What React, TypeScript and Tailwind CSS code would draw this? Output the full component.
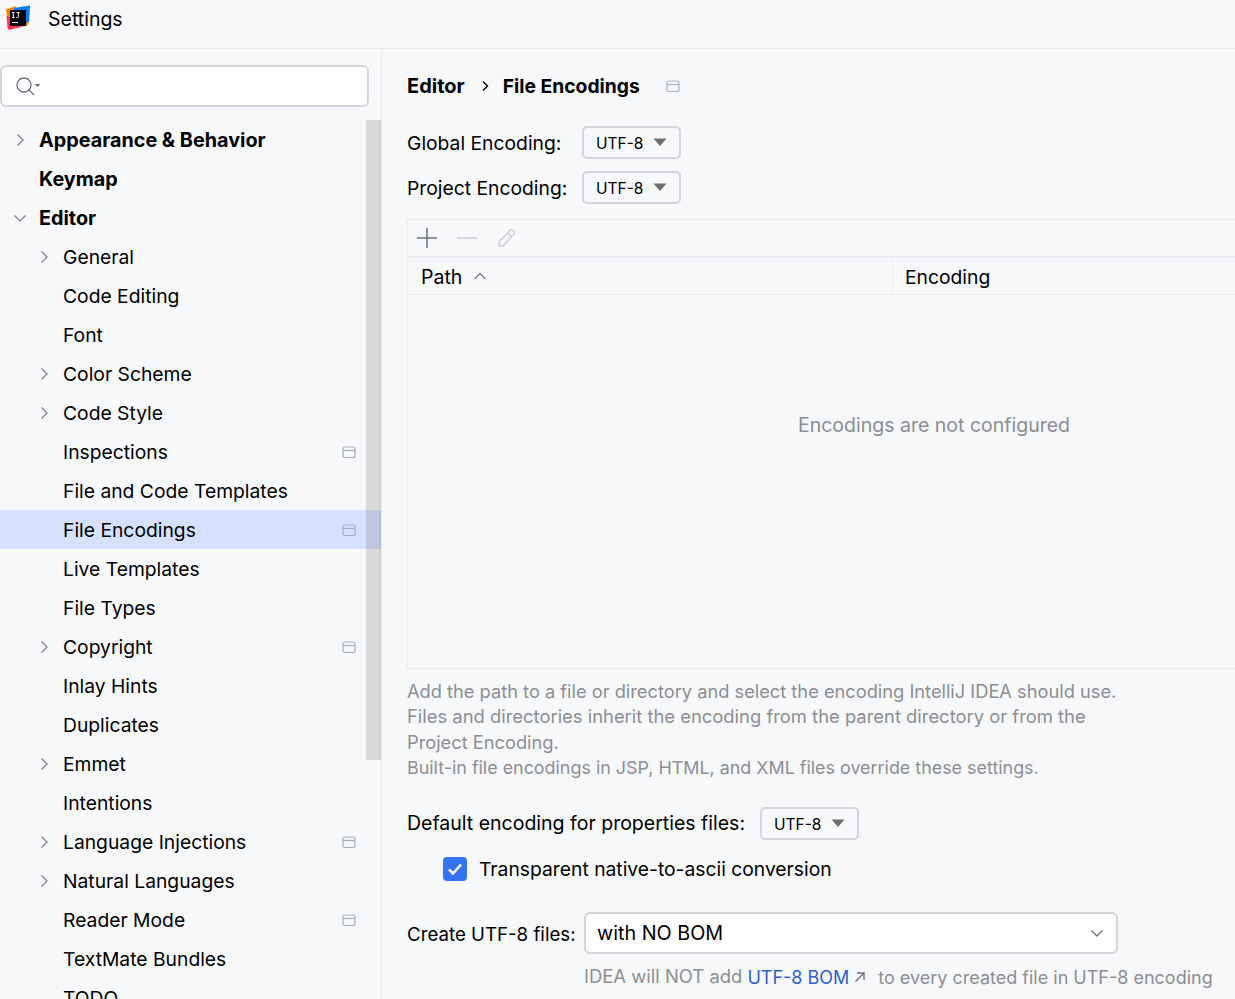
const rows: { label: string; depth: number; bold?: boolean; arrow?: 'right' | 'down'; badge?: boolean; selected?: boolean }[] = [
  { label: 'Appearance & Behavior', depth: 0, bold: true, arrow: 'right' },
  { label: 'Keymap', depth: 0, bold: true },
  { label: 'Editor', depth: 0, bold: true, arrow: 'down' },
  { label: 'General', depth: 1, arrow: 'right' },
  { label: 'Code Editing', depth: 1 },
  { label: 'Font', depth: 1 },
  { label: 'Color Scheme', depth: 1, arrow: 'right' },
  { label: 'Code Style', depth: 1, arrow: 'right' },
  { label: 'Inspections', depth: 1, badge: true },
  { label: 'File and Code Templates', depth: 1 },
  { label: 'File Encodings', depth: 1, badge: true, selected: true },
  { label: 'Live Templates', depth: 1 },
  { label: 'File Types', depth: 1 },
  { label: 'Copyright', depth: 1, arrow: 'right', badge: true },
  { label: 'Inlay Hints', depth: 1 },
  { label: 'Duplicates', depth: 1 },
  { label: 'Emmet', depth: 1, arrow: 'right' },
  { label: 'Intentions', depth: 1 },
  { label: 'Language Injections', depth: 1, arrow: 'right', badge: true },
  { label: 'Natural Languages', depth: 1, arrow: 'right' },
  { label: 'Reader Mode', depth: 1, badge: true },
  { label: 'TextMate Bundles', depth: 1 },
  { label: 'TODO', depth: 1 },
];

function ProjectBadge() {
  return (
    <svg width="14" height="14" viewBox="0 0 14 14" fill="none" stroke="#a8adbd" strokeWidth="1.2">
      <rect x="1" y="2" width="12" height="10.5" rx="2" />
      <path d="M1 5.5h12" />
    </svg>
  );
}

function Logo() {
  return (
    <svg width="32" height="32" viewBox="0 0 32 32" className="shrink-0">
      <path d="M6 9 15 6.500 24 14 29 22 27 26 14 24 7 17Z" fill="#ff8100" />
      <path d="M14 8 30 5.500 29 22 24 23 14 16Z" fill="#087cfa" />
      <path d="M6.500 16 18 22 23 26.500 9 30 7.500 28Z" fill="#fe315d" />
      <rect x="10" y="10" width="16" height="16" fill="#000" />
      <path d="M12 12.500h2.600M13.300 12.500v5M12 17.500h2.600M16.500 12.500h3M18.300 12.500v4.200q0 .9-1 .9h-1" stroke="#fff" strokeWidth="1" fill="none" />
      <rect x="12" y="22" width="6" height="1" fill="#fff" />
    </svg>
  );
}

function Chevron({ dir }: { dir: 'right' | 'down' }) {
  return (
    <svg width="14" height="14" viewBox="0 0 14 14" fill="none" stroke="#7c7f88" strokeWidth="1.2">
      {dir === 'right' ? <path d="M4.500 1.500 10 7l-5.500 5.500" /> : <path d="M1.500 4.500 7 10l5.500-5.500" />}
    </svg>
  );
}

function TreeRow({ row }: { row: (typeof rows)[number] }) {
  const indent = row.depth === 0 ? 'pl-[39px]' : 'pl-[63px]';
  const arrowLeft = row.depth === 0 ? 'left-[13px]' : 'left-[37px]';
  return (
    <div className={`relative flex h-[39px] shrink-0 items-center pr-[25px] ${indent} ${row.selected ? 'bg-[#d5e1ff]' : ''}`}>
      {row.arrow && (
        <span className={`absolute top-[13px] ${arrowLeft}`}>
          <Chevron dir={row.arrow} />
        </span>
      )}
      <span className={`flex-1 pt-[2px] ${row.bold ? 'text-[19.800px] font-bold' : 'text-[19.300px]'}`}>{row.label}</span>
      {row.badge && <ProjectBadge />}
    </div>
  );
}

function SmallCombo() {
  return (
    <div className="flex h-[33px] w-[99px] shrink-0 items-center rounded-[5px] border-2 border-[#d3d5db] pl-[12px] text-[15.500px]">
      <span className="w-[57px] pt-[2px]">UTF-8</span>
      <svg width="14" height="9" viewBox="0 0 14 9" fill="#6e6e6e" className="mb-[1px]">
        <path d="M0.500 0.500h13L7 8z" />
      </svg>
    </div>
  );
}

export default function App() {
  return (
    <div className="flex h-[999px] w-[1235px] flex-col overflow-hidden bg-[#f7f8fa] font-['Inter',sans-serif] text-[19.500px] text-black">
      <div className="flex h-[49px] shrink-0 items-start border-b border-[#ebecf0]">
        <Logo />
        <span className="mt-[5px] ml-[16px]">Settings</span>
      </div>

      <div className="flex min-h-0 flex-1">
        <aside className="relative flex w-[382px] shrink-0 flex-col overflow-hidden border-r border-[#ebecf0]">
          <div className="mt-[16px] flex h-[42px] w-[369px] shrink-0 items-center rounded-[6px] border-2 border-[#d3d5db] bg-white pl-[13px]">
            <svg width="26" height="22" viewBox="0 0 26 22" fill="none" stroke="#6c707e" strokeWidth="1.300">
              <circle cx="9" cy="10" r="7" />
              <path d="m14 15 5 5" />
              <path d="M19.500 9h6l-3 3z" fill="#6c707e" stroke="none" />
            </svg>
          </div>
          <div className="mt-[13px] flex flex-col">
            {rows.map((row) => (
              <TreeRow key={row.label} row={row} />
            ))}
          </div>
          {/* scrollbar sits on top of the rows */}
          <div className="absolute top-[71px] left-[366px] h-[640px] w-[15px] border-r-2 border-[#7f7f80]/10 bg-[#7f7f80]/25" />
        </aside>

        <main className="flex min-w-0 flex-1 flex-col pt-[24px] pl-[25px]">
          <div className="flex h-[26px] shrink-0 items-center font-bold">
            <span className="text-[20px]">Editor</span>
            <svg width="10" height="12" viewBox="0 0 10 12" fill="none" stroke="#000" strokeWidth="1.400" className="mr-[13px] ml-[15px]">
              <path d="M3 1.500 7.500 6 3 10.500" />
            </svg>
            <span className="text-[19.300px]">File Encodings</span>
            <span className="ml-[26px]">
              <ProjectBadge />
            </span>
          </div>

          <div className="mt-[27px] flex h-[33px] shrink-0 items-center">
            <span className="w-[175px] shrink-0 pt-[2px] text-[19.300px]">Global Encoding:</span>
            <SmallCombo />
          </div>
          <div className="mt-[12px] flex h-[33px] shrink-0 items-center">
            <span className="w-[175px] shrink-0 pt-[2px] text-[19.300px]">Project Encoding:</span>
            <SmallCombo />
          </div>

          <div className="mt-[15px] flex h-[450px] w-[900px] shrink-0 flex-col border-y border-l border-[#ebecf0]">
            <div className="flex h-[38px] shrink-0 items-center gap-[20px] border-b-2 border-[#ebecf0] pl-[9px]">
              <svg width="20" height="20" viewBox="0 0 20 20" stroke="#6c707e" strokeWidth="1.500">
                <path d="M10 0v20M0 10h20" />
              </svg>
              <svg width="20" height="20" viewBox="0 0 20 20" stroke="#c9ccd6" strokeWidth="1.500">
                <path d="M0 10h20" />
              </svg>
              <svg width="20" height="20" viewBox="0 0 20 20" fill="none" stroke="#c9ccd6" strokeWidth="1.400">
                <path d="M2 14 13 2.500a2 2 0 0 1 2.800 0l1 1a2 2 0 0 1 0 2.800L6 18H2zM11 5l4 4" />
              </svg>
            </div>
            <div className="flex h-[37px] shrink-0 border-b border-[#ebecf0]">
              <div className="flex w-[485px] items-center border-r border-[#ebecf0] pl-[13px]">
                <span className="pt-[4px]">Path</span>
                <svg width="14" height="10" viewBox="0 0 14 10" fill="none" stroke="#7c7f88" strokeWidth="1.300" className="ml-[11px]">
                  <path d="M1.500 8 7 2.500 12.500 8" />
                </svg>
              </div>
              <div className="flex items-center pt-[3px] pl-[12px] text-[19.300px]">Encoding</div>
            </div>
            <div className="flex w-[835px] flex-1 items-center justify-center pb-[111px] pl-[217px] text-[#8c8e94]">
              Encodings are not configured
            </div>
          </div>

          <p className="mt-[10px] w-[760px] shrink-0 text-[18.250px] leading-[25.300px] text-[#8c8e94]">
            Add the path to a file or directory and select the encoding IntelliJ IDEA should use.
            <br />
            <span className="text-[18.400px]">Files and directories inherit the encoding from the parent directory or from the</span>
            <br />
            Project Encoding.
            <br />
            <span className="text-[17.900px]">Built-in file encodings in JSP, HTML, and XML files override these settings.</span>
          </p>

          <div className="mt-[27px] flex h-[33px] shrink-0 items-center">
            <span className="w-[353px] shrink-0">Default encoding for properties files:</span>
            <SmallCombo />
          </div>

          <div className="mt-[17px] ml-[36px] flex h-[24px] shrink-0 items-center">
            <span className="flex h-[24px] w-[24px] items-center justify-center rounded-[4px] bg-[#3574f0]">
              <svg width="16" height="14" viewBox="0 0 16 14" fill="none" stroke="#fff" strokeWidth="2.500">
                <path d="M2 7.500 6 11.500 14 2.500" />
              </svg>
            </span>
            <span className="ml-[12px] text-[19.300px]">Transparent native-to-ascii conversion</span>
          </div>

          <div className="mt-[31px] flex h-[42px] shrink-0 items-center">
            <span className="w-[177px] shrink-0 pt-[3px] text-[18.700px] whitespace-nowrap">Create UTF-8 files:</span>
            <div className="flex h-[42px] w-[534px] items-center justify-between rounded-[6px] border-2 border-[#d3d5db] bg-white pr-[12px] pl-[11px]">
              <span className="pt-[2px] text-[19.800px]">with NO BOM</span>
              <svg width="14" height="14" viewBox="0 0 14 14" fill="none" stroke="#6c707e" strokeWidth="1.300">
                <path d="M1.500 4.500 7 10l5.500-5.500" />
              </svg>
            </div>
          </div>

          <div className="mt-[9px] ml-[177px] flex shrink-0 items-center text-[18px] whitespace-nowrap text-[#8c8e94]">
            <span className="text-[18.450px]">IDEA will NOT add</span>
            <span className="ml-[5px] text-[#2e5fcf]">UTF-8 BOM</span>
            <svg width="12" height="12" viewBox="0 0 12 12" fill="none" stroke="#6c707e" strokeWidth="1.400" className="mr-[12px] ml-[5px] shrink-0">
              <path d="M1.500 10.500 10 2M3 2h7v7" />
            </svg>
            <span>to every created file in UTF-8 encoding</span>
          </div>
        </main>
      </div>
    </div>
  );
}
